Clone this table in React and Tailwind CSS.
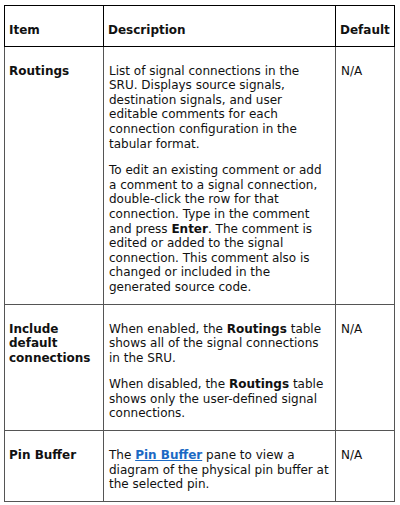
const rows = [
  {
    item: <>Routings</>,
    desc: [
      <>List of signal connections in the SRU. Displays source signals, destination signals, and user editable comments for each connection configuration in the tabular format.</>,
      <>To edit an existing comment or add a comment to a signal connection, double-click the row for that connection. Type in the comment and press <b>Enter</b>. The comment is edited or added to the signal connection. This comment also is changed or included in the generated source code.</>,
    ],
    def: "N/A",
  },
  {
    item: <>Include default connections</>,
    desc: [
      <>When enabled, the <b>Routings</b> table shows all of the signal connections in the SRU.</>,
      <>When disabled, the <b>Routings</b> table shows only the user-defined signal connections.</>,
    ],
    def: "N/A",
  },
  {
    item: <>Pin Buffer</>,
    desc: [
      <>The <a href="#" className="font-bold text-[#1b6ac4] underline">Pin Buffer</a> pane to view a diagram of the physical pin buffer at the selected pin.</>,
    ],
    def: "N/A",
  },
]

export default function App()
{
  return (
    <div className="w-[400px] h-[505px] bg-white pt-[5px] pl-[4px] text-[12px] leading-[14.6px] text-[#111]" style={{ fontFamily: "Verdana, 'DejaVu Sans', sans-serif" }}>
      <table className="table-fixed border-collapse w-[390px]">
        <colgroup>
          <col className="w-[99px]" />
          <col className="w-[232px]" />
          <col className="w-[59px]" />
        </colgroup>
        <thead>
          <tr>
            <th className="border border-black text-left align-top font-bold pl-[4px] pr-[3px] pt-[17px] pb-[8px]">Item</th>
            <th className="border border-black text-left align-top font-bold pl-[4px] pr-[3px] pt-[17px] pb-[8px]">Description</th>
            <th className="border border-black text-left align-top font-bold pl-[4px] pr-[3px] pt-[17px] pb-[8px]">Default</th>
          </tr>
        </thead>
        <tbody>
          {rows.map((r, i) => (
            <tr key={i}>
              <td className="border border-[#555] align-top font-bold pl-[4px] pr-[3px] pt-[17px] pb-[9px]">{r.item}</td>
              <td className="border border-[#555] align-top pl-[5px] pr-[6px] pt-[17px] pb-[9px]">
                {r.desc.map((d, j) => (
                  <p key={j} className={j > 0 ? "mt-[12px]" : ""}>{d}</p>
                ))}
              </td>
              <td className="border border-[#555] align-top pl-[5px] pr-[3px] pt-[17px] pb-[9px]">{r.def}</td>
            </tr>
          ))}
        </tbody>
      </table>
    </div>
  )
}
